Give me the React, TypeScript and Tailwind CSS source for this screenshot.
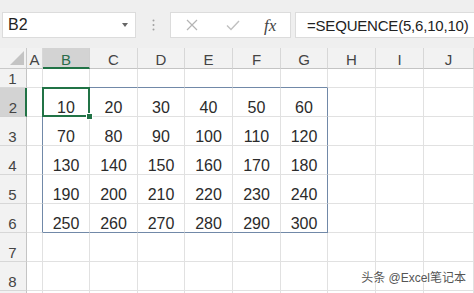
import React from 'react';

const COLS = ['A', 'B', 'C', 'D', 'E', 'F', 'G', 'H', 'I', 'J'];
const ROWS = [1, 2, 3, 4, 5, 6, 7, 8, 9];

function cellValue(row: number, col: number) {
  // SEQUENCE(5,6,10,10) spills into B2:G6
  if (row < 2 || row > 6 || col < 1 || col > 6) return '';
  return String(10 + ((row - 2) * 6 + (col - 1)) * 10);
}

function FormulaBar() {
  return (
    <div className="flex h-[48px] items-start pt-[12px]">
      <div className="ml-[2px] flex h-[26px] w-[134px] items-center justify-between border border-[#dcdcdc] bg-white pl-[5px] pr-[7px]">
        <span className="text-[16px] leading-none text-[#222]">B2</span>
        <svg width="6" height="4" viewBox="0 0 6 4">
          <path d="M0 0 L6 0 L3 4 Z" fill="#666" />
        </svg>
      </div>
      <div className="flex h-[26px] w-[34px] items-center justify-center">
        <svg width="3" height="12" viewBox="0 0 3 12">
          <circle cx="1.5" cy="1.5" r="1" fill="#a0a0a0" />
          <circle cx="1.5" cy="6" r="1" fill="#a0a0a0" />
          <circle cx="1.5" cy="10.5" r="1" fill="#a0a0a0" />
        </svg>
      </div>
      <div className="flex h-[26px] w-[121px] items-center border border-[#dcdcdc] bg-white">
        <div className="flex w-[40px] justify-center pl-[2px]">
          <svg width="12" height="12" viewBox="0 0 12 12">
            <path d="M1 1 L11 11 M11 1 L1 11" stroke="#b4b4b4" strokeWidth="1.2" fill="none" />
          </svg>
        </div>
        <div className="flex w-[40px] justify-center pl-[4px]">
          <svg width="14" height="11" viewBox="0 0 14 11">
            <path d="M1 5.5 L5 9.5 L13 1" stroke="#c0c0c0" strokeWidth="1.4" fill="none" />
          </svg>
        </div>
        <div className="flex w-[40px] justify-center">
          <span className="font-['Liberation_Serif',serif] text-[17px] italic leading-none text-[#444]">fx</span>
        </div>
      </div>
      <div className="ml-[4px] flex h-[26px] flex-1 items-center border border-r-0 border-[#dcdcdc] bg-white pl-[11px]">
        <span className="text-[15px] leading-none tracking-[-0.2px] text-[#222]">=SEQUENCE(5,6,10,10)</span>
      </div>
    </div>
  );
}

function Corner() {
  return (
    <div className="flex items-end justify-end border-r border-b border-[#c9c9c9] bg-[#f2f2f2] pr-[2px] pb-[3px]">
      <svg width="14" height="14" viewBox="0 0 14 14">
        <path d="M14 0 L14 14 L0 14 Z" fill="#c4c4c4" />
      </svg>
    </div>
  );
}

function ColHeader({ label }: { label: string }) {
  const selected = label === 'B';
  return (
    <div
      className={
        selected
          ? 'flex items-end justify-center border-r border-b-2 border-r-[#d0d0d0] border-b-[#217346] bg-[#d3d3d3] text-[15px] leading-[14px] text-[#2a6d4b]'
          : 'flex items-end justify-center border-r border-b border-r-[#d7d7d7] border-b-[#c4c4c4] bg-[#f2f2f2] pb-[1px] text-[15px] leading-[14px] text-[#444]'
      }
    >
      {label}
    </div>
  );
}

function RowHeader({ row }: { row: number }) {
  const selected = row === 2;
  // row 9 only peeks in at the bottom edge, its number is not visible
  const label = row < 9 ? row : '';
  return (
    <div
      className={
        selected
          ? 'flex items-end justify-center border-r-2 border-b border-r-[#217346] border-b-[#d0d0d0] bg-[#d3d3d3] pb-[1px] pl-[1px] text-[15px] leading-[14px] text-[#444]'
          : 'flex items-end justify-center border-r border-b border-r-[#c4c4c4] border-b-[#d7d7d7] bg-[#f2f2f2] pb-[1px] pr-[1px] text-[15px] leading-[14px] text-[#444]'
      }
    >
      {label}
    </div>
  );
}

function Cell({ row, col }: { row: number; col: number }) {
  const inRows = row >= 2 && row <= 6;
  const inCols = col >= 1 && col <= 6;
  const spillRight = inRows && (col === 0 || col === 6);
  const spillBottom = inCols && (row === 1 || row === 6);
  const value = cellValue(row, col);
  const active = row === 2 && col === 1;

  return (
    <div
      className={[
        'relative flex items-end justify-center border-r border-b pb-[1px] text-[16px] leading-[14px] text-[#2b2b2b]',
        spillRight ? 'border-r-[#7189a8]' : 'border-r-[#e1e1e1]',
        spillBottom ? 'border-b-[#7189a8]' : 'border-b-[#e1e1e1]',
        active ? 'z-10' : '',
      ].join(' ')}
    >
      {value}
      {active ? (
        <>
          <div className="pointer-events-none absolute -top-px -left-px -right-px -bottom-px border-2 border-[#217346]" />
          <div className="absolute -right-[4px] -bottom-[4px] h-[7px] w-[7px] border border-white bg-[#217346]" />
        </>
      ) : null}
    </div>
  );
}

export default function App() {
  return (
    <div className="relative h-[293px] w-[474px] overflow-hidden bg-[#efefef] font-['Liberation_Sans',Arial,sans-serif]">
      <FormulaBar />
      <div className="grid grid-cols-[27px_16px_47px_48px_47px_48px_48px_47px_48px_48px_50px] grid-rows-[21px_19px_29px_29px_29px_29px_29px_29px_29px_29px] bg-white">
        <Corner />
        {COLS.map((c) => (
          <ColHeader key={c} label={c} />
        ))}
        {ROWS.map((r) => (
          <React.Fragment key={r}>
            <RowHeader row={r} />
            {COLS.map((c, i) => (
              <Cell key={c} row={r} col={i} />
            ))}
          </React.Fragment>
        ))}
      </div>
      <div className="absolute right-[8px] bottom-[9px] font-['Liberation_Sans','Noto_Sans_CJK_SC',sans-serif] text-[12px] leading-none text-[#555] [text-shadow:0_0_2px_#fff,0_0_2px_#fff]">
        头条 @Excel笔记本
      </div>
    </div>
  );
}
